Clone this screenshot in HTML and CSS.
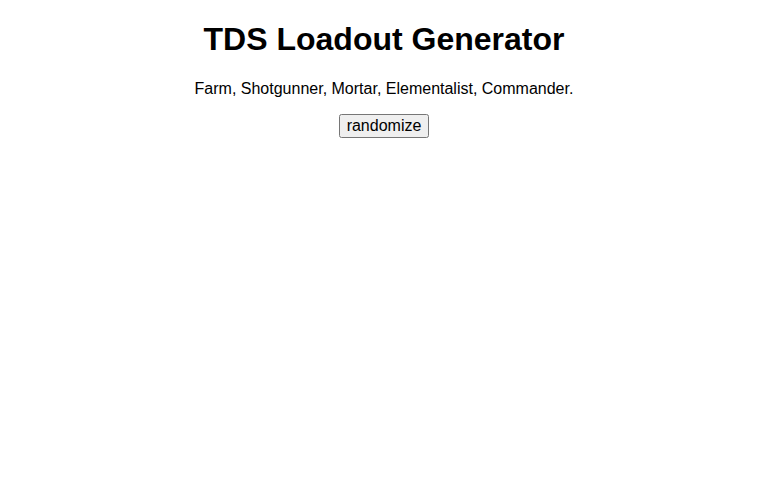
FILE: index.html
```html
<!DOCTYPE html>
<html lang="en">
<head>
    <meta charset="UTF-8">
    <meta name="viewport" content="width=device-width, initial-scale=1.0">
    <title>TDS Loadout Generator</title>
    <link rel="stylesheet" href="styles.css">
</head>
<body>

<h1>TDS Loadout Generator</h1>
<p id="loadout">Farm, Shotgunner, Mortar, Elementalist, Commander.</p>
<button onclick="randomize()">randomize</button>

<script>
    const towers = ["Scout", "Sniper", "Paintballer", "Demoman", "Soldier", "Freezer", "Hunter", "Ace Pilot",
        "Medic", "Pyromancer", "Militant", "Shotgunner", "Rocketeer", "Farm", "Mortar", "Elementalist",
        "Commander", "Minigunner", "Ranger", "DJ Booth", "Turret", "Engineer", "Accelerator", "Cowboy"];

    function randomize() {
        const pool = towers.slice();
        const pick = [];
        for (let i = 0; i < 5; i++) {
            pick.push(pool.splice(Math.floor(Math.random() * pool.length), 1)[0]);
        }
        document.getElementById('loadout').innerText = pick.join(', ') + '.';
    }
</script>

</body>
</html>
```

FILE: styles.css
```css
body {
    margin: 0;
    font-family: 'Liberation Sans', Arial, sans-serif;
    color: #000;
    background: #fff;
    text-align: center;
}
h1 {
    font-size: 32px;
    margin: 21px 0 22px;
}
p {
    font-size: 16px;
    margin: 16px 0;
}
button {
    font-family: inherit;
    font-size: 16px;
    padding: 1px 6px;
}
```
